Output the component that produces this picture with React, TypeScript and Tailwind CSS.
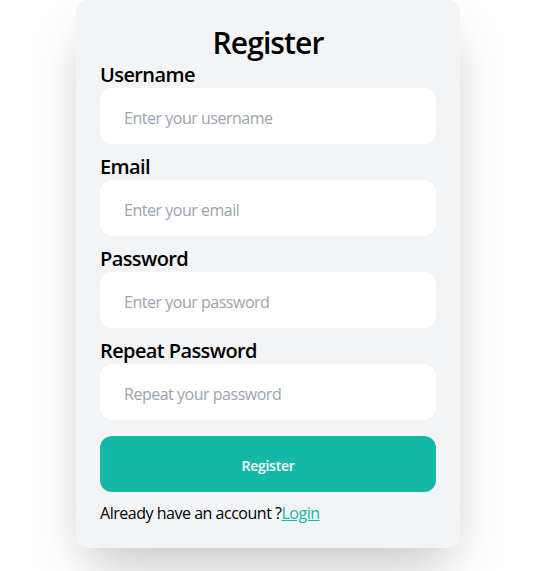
import React from "react";

const fields = [
  { id: "username", label: "Username", type: "text", placeholder: "Enter your username" },
  { id: "email", label: "Email", type: "email", placeholder: "Enter your email" },
  { id: "password", label: "Password", type: "password", placeholder: "Enter your password" },
  { id: "repeat", label: "Repeat Password", type: "password", placeholder: "Repeat your password" },
];

export default function App() {
  return (
    <div className="min-h-[571px] bg-white pl-[76px] font-['Open_Sans',sans-serif] text-black">
      <form
        onSubmit={(e) => e.preventDefault()}
        className="w-96 rounded-xl bg-[#f3f4f6] p-6 shadow-2xl"
      >
        <h1 className="pt-0.5 text-center text-3xl font-semibold leading-[34px] tracking-[-0.03em]">
          Register
        </h1>

        {fields.map((f, i) => (
          <div key={f.id} className={i > 0 ? "mt-2" : ""}>
            <label
              htmlFor={f.id}
              className="block pt-0.5 text-xl font-semibold leading-[26px] tracking-[-0.03em]"
            >
              {f.label}
            </label>
            <input
              id={f.id}
              type={f.type}
              placeholder={f.placeholder}
              className="block h-14 w-full rounded-xl bg-white px-6 pt-1 text-base tracking-[-0.03em] outline-none placeholder:text-[#9ca3af]"
            />
          </div>
        ))}

        <button
          type="submit"
          className="mt-4 h-14 w-full rounded-xl bg-[#14b8a6] pt-1 text-sm font-semibold tracking-[-0.02em] text-white"
        >
          Register
        </button>

        <p className="mt-2 pt-0.5 text-base leading-[22px] tracking-[-0.03em]">
          Already have an account ?
          <a href="#" className="text-[#14b8a6] underline">
            Login
          </a>
        </p>
      </form>
    </div>
  );
}
